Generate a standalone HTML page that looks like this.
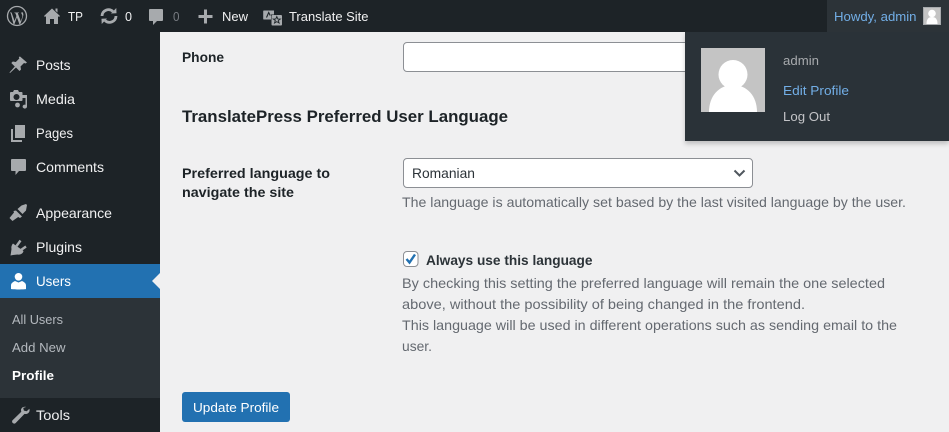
<!DOCTYPE html>
<html><head><meta charset="utf-8"><title>Profile</title>
<style>
html,body{margin:0;padding:0;width:949px;height:432px;overflow:hidden;background:#f0f0f1}
svg{display:block}
text{font-family:"Liberation Sans",sans-serif;font-size:14px;white-space:pre}
.b{font-weight:700}
</style></head><body>
<svg width="949" height="432" viewBox="0 0 949 432" xmlns="http://www.w3.org/2000/svg">
<defs><filter id="s" x="-5%" y="-5%" width="110%" height="115%"><feDropShadow dx="0" dy="3" stdDeviation="2.5" flood-color="#000" flood-opacity=".2"/></filter></defs>
<rect width="949" height="432" fill="#f0f0f1"/>
<!-- sidebar -->
<rect x="0" y="32" width="160" height="400" fill="#1d2327"/>
<rect x="0" y="264" width="160" height="34" fill="#2271b1"/>
<rect x="0" y="298" width="160" height="100" fill="#2c3338"/>
<path d="M160 273l-8 8 8 8z" fill="#f0f0f1"/>
<g fill="#a7aaad">
<path d="M20 56.500l7 6-1.500 1-1.500-.5-3.500 3.500.5 3-1.500 1.500-3.500-3.500-6 5.500-.5-.5 5.300-6-3.500-3.500 1.500-1.500 3 .5 3.500-3.500-.5-1.500z"/>
<path d="M11 92h2l1-2h4l1 2h2.500c.8 0 1 .5 1 1v7c0 .6-.4 1-1 1H11c-.6 0-1-.4-1-1v-7c0-.6.4-1 1-1zm5.500 2a3 3 0 100 6 3 3 0 000-6z" fill-rule="evenodd"/>
<path d="M22 95h5v11.500a2.200 2 0 11-1.500-1.800V98h-3.500z"/>
<circle cx="17.500" cy="105" r="2.400"/>
<path d="M15 125h10v13H15z"/><path d="M11 129h2v11h9v2H11z"/>
<path d="M12 159h13c.6 0 1 .4 1 1v10c0 .6-.4 1-1 1h-6l-3.500 4v-4H12c-.6 0-1-.4-1-1v-10c0-.6.4-1 1-1z"/>
<path d="M17.500 209l4-3.500 4.500-1.500 1 1-1 5.500-3.500 3.500zM16 210.500l6 6-2 1.500-1.800-1-5.700 4-3-3 4.500-5.500-.5-1.500z"/>
<path d="M13 243.500l10.500 7.500c-.5 2.500-3 4-6 3.500l-4.500.5-2.500.5.5-3 .5-3.500c-.5-2 .2-4 1.500-5.500z"/>
<path d="M16.500 246l4-5.500M21 250l5-3.500" stroke="#a7aaad" stroke-width="2.400" fill="none"/>
<path d="M26 407c-2.400-.8-4.800.8-5 3 0 .7.100 1.200.3 1.700l-9 8.800c-.5 1-.1 2.300.8 2.800 1 .6 2 .4 2.700-.4l8.700-9c2.500.6 5-1 5.100-3.700 0-.6-.1-1.100-.2-1.500l-2.700 2.600-2.800-.7-.7-2.700z"/>
</g>
<g fill="#fff"><circle cx="18.500" cy="276.800" r="3.800"/><path d="M11 289v-3.500c0-2.500 2-3.500 4-4.500l3.500 1.500 3.500-1.500c2 1 4 2 4 4.500V289c-1 .6-14 .6-15 0z"/></g>
<g fill="#f0f0f1">
<text x="36" y="70" textLength="34.500" lengthAdjust="spacingAndGlyphs">Posts</text>
<text x="36" y="104" textLength="39" lengthAdjust="spacingAndGlyphs">Media</text>
<text x="36" y="138" textLength="37" lengthAdjust="spacingAndGlyphs">Pages</text>
<text x="36" y="172" textLength="68" lengthAdjust="spacingAndGlyphs">Comments</text>
<text x="36" y="218" textLength="76" lengthAdjust="spacingAndGlyphs">Appearance</text>
<text x="36" y="252" textLength="46" lengthAdjust="spacingAndGlyphs">Plugins</text>
<text x="36" y="286" textLength="35" lengthAdjust="spacingAndGlyphs" fill="#fff">Users</text>
<text x="36" y="420" textLength="34" lengthAdjust="spacingAndGlyphs">Tools</text>
</g>
<g style="font-size:13px">
<text x="12" y="324" textLength="51" lengthAdjust="spacingAndGlyphs" fill="#b4b9be" style="font-size:13px">All Users</text>
<text x="12" y="352" textLength="53.500" lengthAdjust="spacingAndGlyphs" fill="#b4b9be" style="font-size:13px">Add New</text>
<text x="12" y="380" textLength="42" lengthAdjust="spacingAndGlyphs" fill="#fff" class="b" style="font-size:13px">Profile</text>
</g>
<!-- content -->
<text x="182" y="62" textLength="42" lengthAdjust="spacingAndGlyphs" class="b" fill="#1d2327">Phone</text>
<rect x="403.500" y="42.500" width="340" height="29" rx="3.500" fill="#fff" stroke="#8c8f94"/>
<text x="182" y="122" textLength="326" lengthAdjust="spacingAndGlyphs" class="b" fill="#1d2327" style="font-size:17px">TranslatePress Preferred User Language</text>
<text x="182" y="178" textLength="148" lengthAdjust="spacingAndGlyphs" class="b" fill="#1d2327">Preferred language to</text>
<text x="182" y="197" textLength="112" lengthAdjust="spacingAndGlyphs" class="b" fill="#1d2327">navigate the site</text>
<rect x="403.500" y="158.500" width="349" height="29" rx="3.500" fill="#fff" stroke="#8c8f94"/>
<text x="412" y="178" textLength="63" lengthAdjust="spacingAndGlyphs" fill="#2c3338">Romanian</text>
<path d="M734.500 170.500l5 5 5-5" fill="none" stroke="#50575e" stroke-width="2"/>
<text x="402" y="207" textLength="504" lengthAdjust="spacingAndGlyphs" fill="#646970">The language is automatically set based by the last visited language by the user.</text>
<rect x="403.500" y="251.500" width="14.500" height="15" rx="3.500" fill="#fff" stroke="#8c8f94"/>
<path d="M406.500 259l3 3.500 5.500-8" fill="none" stroke="#2271b1" stroke-width="2.400"/>
<text x="426" y="265" textLength="166.500" lengthAdjust="spacingAndGlyphs" class="b" fill="#2c3338">Always use this language</text>
<g fill="#646970">
<text x="402" y="288" textLength="483" lengthAdjust="spacingAndGlyphs">By checking this setting the preferred language will remain the one selected</text>
<text x="402" y="309" textLength="403" lengthAdjust="spacingAndGlyphs">above, without the possibility of being changed in the frontend.</text>
<text x="402" y="330" textLength="495" lengthAdjust="spacingAndGlyphs">This language will be used in different operations such as sending email to the</text>
<text x="402" y="351" textLength="30" lengthAdjust="spacingAndGlyphs">user.</text>
</g>
<rect x="182" y="392" width="108" height="30" rx="3" fill="#2271b1"/>
<text x="193" y="412" textLength="86" lengthAdjust="spacingAndGlyphs" fill="#fff" style="font-size:13px">Update Profile</text>
<!-- admin bar -->
<rect x="685" y="32" width="264" height="109" fill="#2c3338" filter="url(#s)"/>
<rect width="949" height="32" fill="#1d2327"/>
<rect x="827" width="122" height="32" fill="#2c3338"/>
<g fill="none" stroke="#a7aaad">
<circle cx="17" cy="16" r="9.500" stroke-width="1.300"/>
</g>
<path d="M10 12.500h1.600l3 8.500 1.800-5-1-2.800-1-.2v-.5h4.500v.5l-1.100.2 3 8 1.200-3.500c.6-1.800.4-2.700-.5-4l-.2-.7c0 -.5.500-1 1-1 .8 .9 1.200 2 1 3.200-.2 1.500-2.800 8.500-3 9h-.9l-2.500-6.800-2.500 6.800h-.9L10.700 13.200l-.7-.2z" fill="#a7aaad"/>
<path d="M52 8.500l8 7.500-1 1-1-.9V24h-4v-5h-4v5h-4v-7.900l-1 .9-1-1zM55.500 8.500h2v4l-2-1.800z" fill="#a7aaad"/>
<text x="68" y="21" textLength="15" lengthAdjust="spacingAndGlyphs" fill="#f0f0f1" style="font-size:13px">TP</text>
<path d="M102 16a6.500 6.500 0 0 1 11-4.500M116 16a6.500 6.500 0 0 1-11 4.500" fill="none" stroke="#a7aaad" stroke-width="2.800"/>
<path d="M111 13.500l5.500-.2-.2-5.300zM107 18.500l-5.500.2.200 5.300z" fill="#a7aaad"/>
<text x="125" y="21" textLength="7" lengthAdjust="spacingAndGlyphs" fill="#f0f0f1" style="font-size:13px">0</text>
<path d="M150 9h12c.6 0 1 .4 1 1v10c0 .6-.4 1-1 1h-5l-4 4v-4h-3c-.6 0-1-.4-1-1V10c0-.6.4-1 1-1z" fill="#a7aaad"/>
<text x="173" y="21" textLength="6.500" lengthAdjust="spacingAndGlyphs" fill="#787c82" style="font-size:13px">0</text>
<path d="M204.500 10h3v5.500h5.500v3h-5.500v5.500h-3v-5.500H199v-3h5.500z" fill="#a7aaad" transform="translate(-.5,-.5)"/>
<text x="222" y="21" textLength="26" lengthAdjust="spacingAndGlyphs" fill="#f0f0f1" style="font-size:13px">New</text>
<path d="M264 10.500h10v4h-3v5h-7c-.5 0-.8-.3-.8-.8V11.300c0-.5.300-.8.800-.8z" fill="#a7aaad"/>
<path d="M266.500 17.500l2.200-5 1.500 3" fill="none" stroke="#1d2327" stroke-width="1.100"/>
<rect x="271.500" y="15" width="10.500" height="10.500" rx="1" fill="#a7aaad"/>
<path d="M276.800 16.500l1 2.400 2.500.1-2 1.500.8 2.500-2.300-1.400-2.300 1.400.8-2.500-2-1.500 2.500-.1z" fill="none" stroke="#1d2327" stroke-width=".9"/>
<text x="289" y="21" textLength="79.500" lengthAdjust="spacingAndGlyphs" fill="#f0f0f1" style="font-size:13px">Translate Site</text>
<text x="834" y="21" textLength="82.500" lengthAdjust="spacingAndGlyphs" fill="#72aee6" style="font-size:13px">Howdy, admin</text>
<rect x="923" y="7" width="18" height="18" fill="#c4c4c4"/>
<rect x="923.500" y="7.500" width="17" height="17" fill="none" stroke="#a7aaad"/>
<circle cx="932" cy="13.500" r="3.800" fill="#fff"/><path d="M926.500 24c0-5 2-7 5.500-7s5.500 2 5.500 7z" fill="#fff"/>
<!-- dropdown -->
<rect x="701" y="48" width="64" height="64" fill="#c4c4c4"/>
<circle cx="733" cy="74.500" r="14.500" fill="#fff"/>
<path d="M709 112c0-16 10-27 24-27s24 11 24 27z" fill="#fff"/>
<text x="783" y="65" textLength="36" lengthAdjust="spacingAndGlyphs" fill="#a7aaad" style="font-size:13px">admin</text>
<text x="783" y="95" textLength="66" lengthAdjust="spacingAndGlyphs" fill="#72aee6" style="font-size:13px">Edit Profile</text>
<text x="783" y="121" textLength="47" lengthAdjust="spacingAndGlyphs" fill="#c3c4c7" style="font-size:13px">Log Out</text>
</svg>
</body></html>
